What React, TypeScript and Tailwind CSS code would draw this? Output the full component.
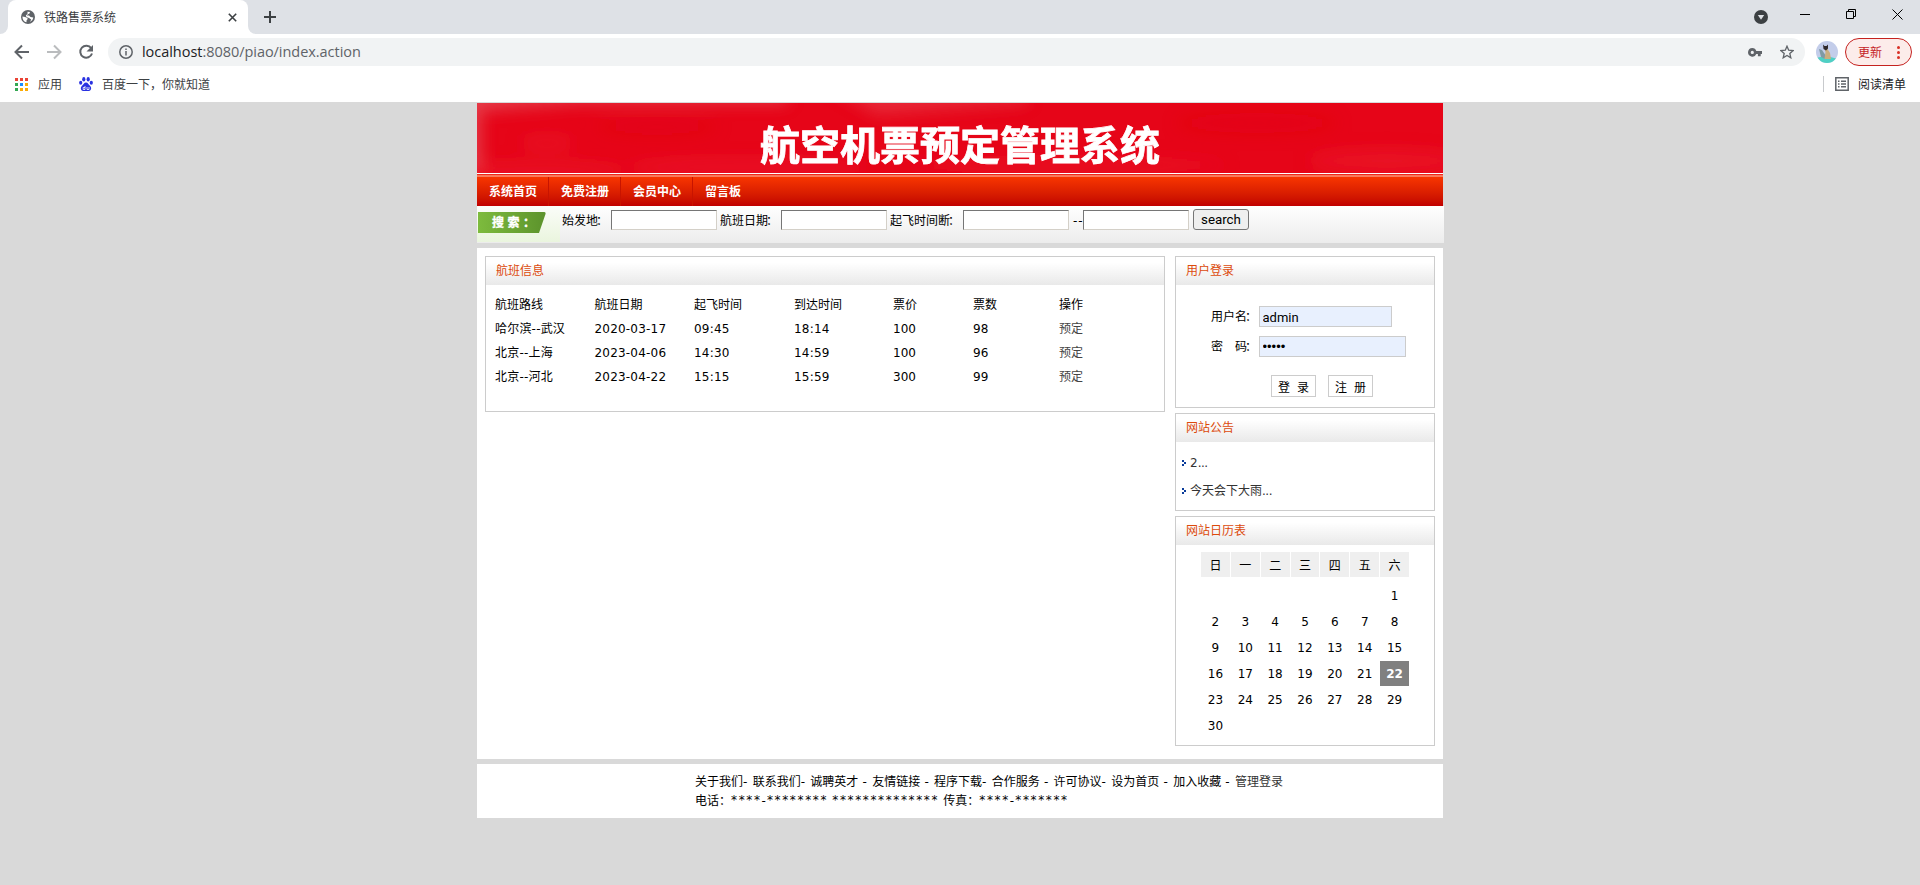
import type { ReactNode } from "react";

const flights = [
  ["哈尔滨--武汉", "2020-03-17", "09:45", "18:14", "100", "98"],
  ["北京--上海", "2023-04-06", "14:30", "14:59", "100", "96"],
  ["北京--河北", "2023-04-22", "15:15", "15:59", "300", "99"],
];

const weekDays = ["日", "一", "二", "三", "四", "五", "六"];

const stars = (n: number) => <span className="relative -top-px tracking-[1.63px]">{"*".repeat(n)}</span>;

const dash = <span className="tracking-[1.1px]">-</span>;

const colon = <span className="mr-[2px] -ml-[2px]">：</span>;

function Browser() {
  return (
    <div className="h-[102px] bg-white font-['Open_Sans','Noto_Sans_CJK_SC',sans-serif] text-[12px] text-[#3c4043]">
      <div className="flex h-[34px] justify-between bg-[#dee1e6]">
        <div className="flex">
          <div className="flex w-2 items-end bg-white">
            <div className="h-full w-full rounded-br-lg bg-[#dee1e6]" />
          </div>
          <div className="flex w-[240px] items-center rounded-t-lg bg-white pr-[11px] pl-[13px]">
            <svg width="14" height="14" viewBox="0 0 14 14" className="shrink-0">
              <circle cx="7" cy="7" r="7" fill="#5f6368" />
              <path d="M1.5 6.5 4 7l2.5 1v1.2l-1 1.2v1.8C3 12 1.4 9.5 1.5 6.5ZM6.5 1.7 9 2l-.5 1.5L7 4.2 5.8 5.5H8L9.5 7l2.8.6c-.3 2-1.6 3.6-3.3 4.3l1.2-2.4L8 8 5.5 7 4.8 5.4 6.5 4Z" fill="#fff" />
            </svg>
            <span className="ml-[9px] flex-1 pt-[2px]">铁路售票系统</span>
            <svg width="9" height="9" viewBox="0 0 9 9" stroke="#3c4043" strokeWidth="1.6">
              <path d="m.8.8 7.4 7.4M8.2.8.8 8.2" />
            </svg>
          </div>
          <div className="w-2 bg-white">
            <div className="h-full rounded-bl-lg bg-[#dee1e6]" />
          </div>
          <svg width="12" height="12" viewBox="0 0 12 12" className="mt-[11px] ml-2" stroke="#3c4043" strokeWidth="2">
            <path d="M6 0v12M0 6h12" />
          </svg>
        </div>
        <div className="flex pr-[17px]">
          <svg width="14" height="14" viewBox="0 0 14 14" className="mt-[10px]">
            <circle cx="7" cy="7" r="7" fill="#3c4043" />
            <path d="M3.8 5h6.4L7 9.8Z" fill="#dee1e6" />
          </svg>
          <svg width="10" height="10" viewBox="0 0 10 10" className="mt-[9px] ml-8" stroke="#000">
            <path d="M0 5.5h10" />
          </svg>
          <svg width="10" height="10" viewBox="0 0 10 10" className="mt-[9px] ml-9" stroke="#000" fill="none">
            <path d="M.5 2.5h7v7h-7zM2.5 2.5v-2h7v7h-2" />
          </svg>
          <svg width="11" height="11" viewBox="0 0 11 11" className="mt-[9px] ml-9" stroke="#000" fill="none">
            <path d="m.5.5 10 10M10.5.5l-10 10" />
          </svg>
        </div>
      </div>
      <div className="flex h-9 items-center pr-2 pl-[14px]">
        <svg width="16" height="16" viewBox="0 0 16 16" fill="none" stroke="#5f6368" strokeWidth="2">
          <path d="M15 8H2M8 1.5 1.5 8 8 14.5" />
        </svg>
        <svg width="16" height="16" viewBox="0 0 16 16" className="ml-4" fill="none" stroke="#babcbe" strokeWidth="2">
          <path d="M1 8h13M8 1.5 14.5 8 8 14.5" />
        </svg>
        <svg width="16" height="16" viewBox="0 0 16 16" className="ml-4" fill="none" stroke="#5f6368" strokeWidth="2">
          <path d="M13.2 4.2A6 6 0 1 0 14 9.5" />
          <path d="M15 1v6.5H8.5Z" fill="#5f6368" stroke="none" />
        </svg>
        <div className="ml-[14px] flex h-7 flex-1 items-center rounded-full bg-[#f1f3f4] pr-[11px] pl-[11px] text-[14px] text-[#5f6368]">
          <svg width="14" height="14" viewBox="0 0 14 14" fill="none" stroke="#5f6368" strokeWidth="1.5">
            <circle cx="7" cy="7" r="6.2" />
            <path d="M7 6v4.5M7 3.4v1.6" />
          </svg>
          <span className="ml-[9px] flex-1 pb-px text-[14.5px] tracking-[-0.04px]">
            <span className="text-[#202124]">localhost</span>:8080/piao/index.action
          </span>
          <svg width="14" height="9" viewBox="0 0 14 9" fill="#5f6368" fillRule="evenodd">
            <path d="M4.3 0a4.3 4.3 0 0 1 4 3H14v3h-1.3v2.3H9.9V6H8.3a4.3 4.3 0 1 1-4-6Zm0 2.8a1.6 1.6 0 1 0 0 3.2 1.6 1.6 0 0 0 0-3.2Z" />
          </svg>
          <svg width="14" height="14" viewBox="0 0 14 14" className="ml-[18px]" fill="none" stroke="#5f6368" strokeWidth="1.3">
            <path d="m7 1.2 1.7 4 4.4.4-3.3 2.9 1 4.3L7 10.5l-3.8 2.3 1-4.3L.9 5.6l4.4-.4Z" />
          </svg>
        </div>
        <svg width="22" height="22" viewBox="0 0 22 22" className="ml-[11px]">
          <clipPath id="avatar"><circle cx="11" cy="11" r="11" /></clipPath>
          <g clipPath="url(#avatar)">
            <path d="M0 0h22v22H0z" fill="#c3cdea" />
            <path d="M0 17q10-3 22 1v4H0z" fill="#4fd0c4" />
            <path d="m3 8 3 1 4 6-1 3-4-2Z" fill="#7f9aa5" />
            <path d="m8.5 7 3 1L14 12l1 6H8.5l1-7Z" fill="#c9ae80" />
            <path d="m7 3.5 1.5 1.5h2L12 3.5v4L10 9.5 7.500 8Z" fill="#2f2a2c" />
          </g>
        </svg>
        <div className="ml-[7px] flex h-7 w-[67px] items-center rounded-full border border-[#c5221f] bg-[#fcecea] pr-[11px] pl-3 text-[#c5221f]">
          <span className="flex-1 pt-px">更新</span>
          <svg width="3" height="13" viewBox="0 0 3 13" fill="#d93025">
            <circle cx="1.5" cy="1.5" r="1.5" />
            <circle cx="1.5" cy="6.5" r="1.5" />
            <circle cx="1.5" cy="11.5" r="1.5" />
          </svg>
        </div>
      </div>
      <div className="flex h-7 items-center pr-[14px] pl-[15px]">
        <svg width="13" height="13" viewBox="0 0 13 13">
          <path d="M0 0h3v3H0zM5 0h3v3H5zM10 0h3v3h-3z" fill="#ea4335" />
          <path d="M0 5h3v3H0zM0 10h3v3H0z" fill="#34a853" />
          <path d="M5 5h3v3H5z" fill="#1a8cff" />
          <path d="M10 5h3v3h-3zM5 10h3v3H5zM10 10h3v3h-3z" fill="#fbab05" />
        </svg>
        <span className="ml-[10px] pt-px">应用</span>
        <svg width="14" height="14" viewBox="0 0 14 14" className="ml-[17px]" fill="#2932e1">
          <ellipse cx="4.8" cy="2.2" rx="1.6" ry="2.2" />
          <ellipse cx="9.2" cy="2.2" rx="1.6" ry="2.2" />
          <ellipse cx="1.7" cy="5.8" rx="1.6" ry="2" />
          <ellipse cx="12.3" cy="5.8" rx="1.6" ry="2" />
          <path d="M7 5.5c2 0 2.5 2 4 3.3 1.8 1.5 1.6 5-1.2 5.2H4.2C1.4 13.8 1.2 10.3 3 8.8 4.5 7.5 5 5.5 7 5.5Z" />
          <path d="M6 9v3.5H4.2V10.5H6M8 10v2.5h2V10" fill="none" stroke="#fff" strokeWidth=".8" />
        </svg>
        <span className="ml-[9px] flex-1 pt-px">百度一下，你就知道</span>
        <div className="h-4 w-px bg-[#c8cacd]" />
        <svg width="14" height="14" viewBox="0 0 14 14" className="mr-[9px] ml-[11px]" fill="none" stroke="#5f6368" strokeWidth="1.5">
          <path d="M.8.8h12.4v12.4H.8zM3 4.3h1.5M6 4.3h5M3 7h1.5M6 7h5M3 9.700h1.5M6 9.700h5" />
        </svg>
        <span className="pt-px text-[#202124]">阅读清单</span>
      </div>
    </div>
  );
}

function Banner() {
  return (
    <div className="relative h-[71px] overflow-hidden border-b border-white bg-[#e60518]">
      <svg width="966" height="70" viewBox="0 0 966 70" className="absolute inset-0">
        <defs>
          <filter id="soft" x="-20%" y="-100%" width="140%" height="300%">
            <feGaussianBlur stdDeviation="8" />
          </filter>
        </defs>
        <g filter="url(#soft)">
          <path d="M-30-30h340v30L100 0 4 8v62h-34Z" fill="#e5606a" opacity=".6" />
          <path d="M330-30h220v30L400 12Z" fill="#ea4c58" opacity=".5" />
          <ellipse cx="70" cy="40" rx="28" ry="7" fill="#ee2a3b" opacity=".35" />
          <ellipse cx="60" cy="68" rx="90" ry="8" fill="#ee2030" opacity=".5" />
          <ellipse cx="270" cy="64" rx="120" ry="8" fill="#f0283c" opacity=".4" />
          <ellipse cx="590" cy="62" rx="160" ry="10" fill="#ee2036" opacity=".3" />
          <ellipse cx="910" cy="58" rx="80" ry="12" fill="#f0283c" opacity=".35" />
          <ellipse cx="180" cy="24" rx="60" ry="8" fill="#e10010" opacity=".5" />
          <ellipse cx="780" cy="20" rx="80" ry="10" fill="#e30010" opacity=".6" />
        </g>
      </svg>
      <h1 className="relative pt-[14px] text-center text-[40px] leading-[58px] font-bold text-white [-webkit-text-stroke:0.8px_white]">航空机票预定管理系统</h1>
    </div>
  );
}

function SearchInput() {
  return <input className="h-5 w-[106px] border border-t-[#767676] border-r-[#d4d0c8] border-b-[#d4d0c8] border-l-[#767676] bg-white" />;
}

function SearchBar() {
  return (
    <div className="-mr-px flex h-[37px] border-b border-[#ececec] bg-linear-to-b from-white to-[#ededed]">
      <div className="w-[83px] bg-linear-to-b from-[#fbfdf9] to-[#eaf5de] pt-[6px] pl-px">
        <svg width="69" height="21" viewBox="0 0 69 21">
          <defs>
            <linearGradient id="green">
              <stop stopColor="#7dbb3d" />
              <stop offset="1" stopColor="#5c932c" />
            </linearGradient>
          </defs>
          <path d="M0 0h66q2 0 1.5 2L61 21H0Z" fill="url(#green)" />
          <text x="14" y="15" fill="#fff" stroke="#fff" strokeWidth=".3" fontSize="12" fontWeight="bold" letterSpacing="3.5">搜索：</text>
        </svg>
      </div>
      <div className="flex h-5 pt-1 pl-[2px] leading-[22px] whitespace-nowrap">
        <span className="w-[49px]">始发地{colon}</span>
        <SearchInput />
        <span className="ml-[3px] w-[61px]">航班日期{colon}</span>
        <SearchInput />
        <span className="ml-[3px] w-[73px]">起飞时间断{colon}</span>
        <SearchInput />
        <span className="w-[14px] pl-1 tracking-[1px]">--</span>
        <SearchInput />
        <button className="-mt-px ml-1 h-[21px] w-14 rounded-[3px] border border-[#767676] bg-[#efefef] font-[Roboto,sans-serif] text-[13.33px] leading-[18px]">search</button>
      </div>
    </div>
  );
}

function Panel({ title, className, children }: { title: string; className: string; children: ReactNode }) {
  return (
    <section className={`border border-[#ccc] ${className}`}>
      <h2 className="h-7 bg-linear-to-b from-white from-20% to-[#e9e9e9] pl-[10px] leading-[29px] text-[#dc4a0c]">{title}</h2>
      {children}
    </section>
  );
}

function FlightTable() {
  return (
    <table className="mt-2 ml-[9px] w-[640px] table-fixed">
      <thead>
        <tr className="h-6 text-left">
          <th className="w-[99.5px] font-normal">航班路线</th>
          <th className="w-[99.5px] font-normal">航班日期</th>
          <th className="w-[100px] font-normal">起飞时间</th>
          <th className="w-[99px] font-normal">到达时间</th>
          <th className="w-20 font-normal">票价</th>
          <th className="w-[86px] font-normal">票数</th>
          <th className="font-normal">操作</th>
        </tr>
      </thead>
      <tbody>
        {flights.map((row) => (
          <tr key={row[1]} className="h-6">
            {row.map((cell, i) => (
              <td key={i} className={i < 4 ? "tracking-[0.2px]" : ""}>{cell}</td>
            ))}
            <td className="text-[#444]">预定</td>
          </tr>
        ))}
      </tbody>
    </table>
  );
}

function LoginForm() {
  return (
    <div className="pt-[21px] pl-[35px]">
      <div className="flex leading-[22px]">
        <span className="w-12 whitespace-nowrap">用户名{colon}</span>
        <input className="h-[21px] w-[133px] border border-[#ccc] bg-[#e8f0fe] pt-[2px] pl-[2.5px] font-[Roboto,sans-serif] text-[13px]" defaultValue="admin" />
      </div>
      <div className="mt-2 flex leading-[22px]">
        <span className="w-12 whitespace-nowrap">密　码{colon}</span>
        <input type="password" className="h-[21px] w-[147px] border border-[#ccc] bg-[#e8f0fe] pl-[2.5px] font-['Liberation_Sans',sans-serif] text-[13px]" defaultValue="admin" />
      </div>
      <div className="mt-[17px] ml-[60px] flex gap-3">
        <button className="h-[22px] w-[45px] border border-[#ccc] bg-white pt-[3px] leading-[18px] [word-spacing:3px]">登 录</button>
        <button className="h-[22px] w-[45px] border border-[#ccc] bg-white pt-[3px] leading-[18px] [word-spacing:3px]">注 册</button>
      </div>
    </div>
  );
}

function Notice({ children }: { children: ReactNode }) {
  return (
    <li className="flex h-7 items-center text-[#333]">
      <svg width="4" height="6" viewBox="0 0 4 6" className="mr-1" fill="#0b3c9a">
        <path d="M0 0h2v2H0zM2 2h2v2H2zM0 4h2v2H0z" />
      </svg>
      {children}
      <span className="tracking-[-0.5px]">...</span>
    </li>
  );
}

function Calendar() {
  return (
    <div className="mt-[7px] ml-[25px] w-[208px] text-center leading-[27px]">
      <div className="mb-[6px] grid grid-cols-7 gap-px">
        {weekDays.map((d) => (
          <div key={d} className="h-[25px] bg-[#efefef] leading-[28px]">{d}</div>
        ))}
      </div>
      <div className="grid grid-cols-7 gap-px">
        {Array.from({ length: 30 }, (_, i) => i + 1).map((d) => (
          <div
            key={d}
            className={`h-[25px] ${d === 1 ? "col-start-7" : ""} ${d === 22 ? "bg-[#808080] font-bold text-white" : ""}`}
          >
            {d}
          </div>
        ))}
      </div>
    </div>
  );
}

export default function App() {
  return (
    <div className="min-h-[885px] bg-[#d9d9d9] font-['DejaVu_Sans','Noto_Sans_CJK_SC',sans-serif] text-[12px] text-black">
      <Browser />
      <div className="mx-auto w-[966px] pt-px">
        <Banner />
        <div className="h-[3px] border-b-2 border-[#f9795c] bg-[#f0281c]" />
        <nav className="flex h-[29px] bg-linear-to-b from-[#f83500] to-[#c10000] leading-[30px] font-bold text-white">
          {["系统首页", "免费注册", "会员中心", "留言板"].map((item) => (
            <a key={item} className="w-[72px] border-r border-[#c81400] pl-3 last:border-0">{item}</a>
          ))}
        </nav>
        <SearchBar />
        <main className="mt-[5px] flex h-[511px] items-start justify-between bg-white p-2">
          <Panel title="航班信息" className="h-[156px] w-[680px]">
            <FlightTable />
          </Panel>
          <aside className="flex w-[260px] flex-col gap-[5px]">
            <Panel title="用户登录" className="h-[152px]">
              <LoginForm />
            </Panel>
            <Panel title="网站公告" className="h-[98px]">
              <ul className="pt-[7px] pl-[6px]">
                <Notice>2</Notice>
                <Notice>今天会下大雨</Notice>
              </ul>
            </Panel>
            <Panel title="网站日历表" className="h-[230px]">
              <Calendar />
            </Panel>
          </aside>
        </main>
        <footer className="mt-[5px] h-[54px] bg-white pt-[9px] pl-[218px] leading-[19px] whitespace-nowrap [word-spacing:0.4px]">
          <p>
            关于我们{dash} 联系我们{dash} 诚聘英才 {dash} 友情链接 {dash} 程序下载{dash} 合作服务 {dash} 许可协议{dash} 设为首页 {dash} 加入收藏 {dash}{" "}
            <span className="text-[#333]">管理登录</span>
          </p>
          <p>电话：{stars(4)}{dash}{stars(8)} {stars(14)} 传真：{stars(4)}{dash}{stars(7)}</p>
        </footer>
      </div>
    </div>
  );
}
